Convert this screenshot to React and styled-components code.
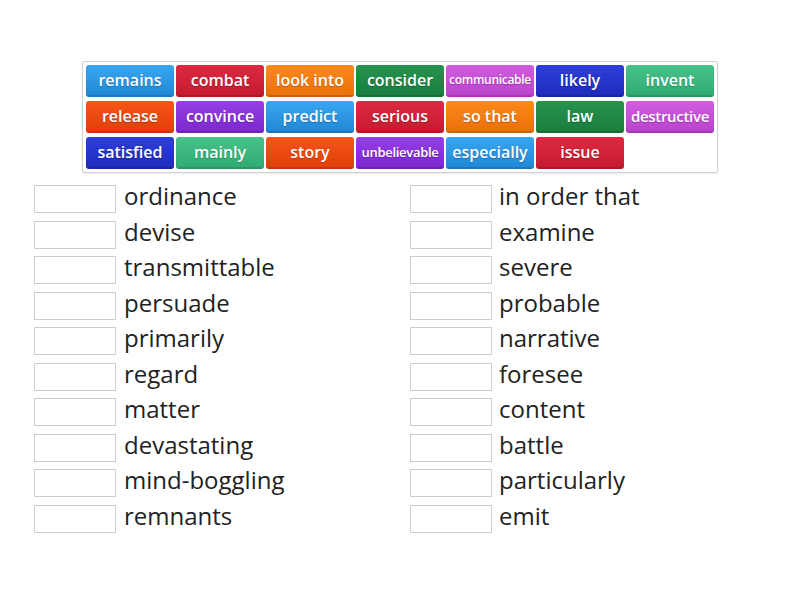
import React from 'react'
import styled, { createGlobalStyle } from 'styled-components'

const GlobalStyle = createGlobalStyle`
    body {
        margin: 0;
        background: #fff;
        font-family: "Open Sans", "Liberation Sans", sans-serif;
    }
`

const colors = {
    blue: ['#3aa6ef', '#1f87d6'],
    red: ['#dc2a42', '#c41a30'],
    orange: ['#fb8a1c', '#ea6f08'],
    green: ['#26934f', '#1a7c3e'],
    magenta: ['#d15ce0', '#b942cc'],
    navy: ['#2d3ed8', '#1d2bbd'],
    teal: ['#48c18a', '#2fab72'],
    fire: ['#f5561a', '#e03e08'],
    purple: ['#9440e4', '#7c27cf'],
}

const tiles = [
    ['remains', 'blue'], ['combat', 'red'], ['look into', 'orange'], ['consider', 'green'],
    ['communicable', 'magenta', 12], ['likely', 'navy'], ['invent', 'teal'],
    ['release', 'fire'], ['convince', 'purple'], ['predict', 'blue'], ['serious', 'red'],
    ['so that', 'orange'], ['law', 'green'], ['destructive', 'magenta', 15],
    ['satisfied', 'navy'], ['mainly', 'teal'], ['story', 'fire'], ['unbelievable', 'purple', 13],
    ['especially', 'blue'], ['issue', 'red'],
]

const left = ['ordinance', 'devise', 'transmittable', 'persuade', 'primarily', 'regard', 'matter', 'devastating', 'mind-boggling', 'remnants']
const right = ['in order that', 'examine', 'severe', 'probable', 'narrative', 'foresee', 'content', 'battle', 'particularly', 'emit']

function App() {
    return (
        <Page>
            <GlobalStyle />
            <Bank>
                {tiles.map(([word, c, size]) => (
                    <Tile key={word} $c={c} $size={size}>{word}</Tile>
                ))}
            </Bank>
            <Answers>
                <Column>
                    {left.map(w => (
                        <Row key={w}><Slot /><Word>{w}</Word></Row>
                    ))}
                </Column>
                <Column>
                    {right.map(w => (
                        <Row key={w} $tight><Slot /><Word>{w}</Word></Row>
                    ))}
                </Column>
            </Answers>
        </Page>
    )
}

const Page = styled.div`
    width: 800px;
    height: 600px;
    padding-top: 61px;
    box-sizing: border-box;
`

const Bank = styled.div`
    width: 636px;
    box-sizing: border-box;
    margin: 0 auto;
    border: 1px solid #cfcfcf;
    border-radius: 2px;
    box-shadow: 0 1px 2px rgba(0,0,0,0.08);
    padding: 3px;
    display: grid;
    grid-template-columns: repeat(7, 88px);
    grid-auto-rows: 32px;
    column-gap: 2px;
    row-gap: 4px;
`

const Tile = styled.div`
    display: flex;
    align-items: center;
    justify-content: center;
    border-radius: 3px;
    background: linear-gradient(${p => colors[p.$c][0]}, ${p => colors[p.$c][1]});
    box-shadow: inset 0 -2px 0 rgba(0,0,0,0.12);
    color: #fff;
    font-weight: 600;
    font-size: ${p => p.$size || 16}px;
    white-space: nowrap;
    letter-spacing: ${p => (p.$size ? '-0.3px' : '0')};
    text-shadow: 0 1px 1px rgba(0,0,0,0.25);
    padding-bottom: 3px;
    box-sizing: border-box;
`

const Answers = styled.div`
    display: grid;
    grid-template-columns: 376px 376px;
    padding-left: 34px;
    margin-top: 12px;
`

const Column = styled.div`
    display: grid;
    grid-auto-rows: 35.5px;
`

const Row = styled.div`
    display: flex;
    align-items: flex-start;
    gap: ${p => (p.$tight ? 7 : 8)}px;
`

const Slot = styled.div`
    width: 82px;
    height: 28px;
    box-sizing: border-box;
    border: 1px solid #cdcdcd;
    background: #fff;
    flex: none;
`

const Word = styled.div`
    font-size: 24px;
    line-height: 28px;
    margin-top: -3px;
    color: #222;
`

export default App
